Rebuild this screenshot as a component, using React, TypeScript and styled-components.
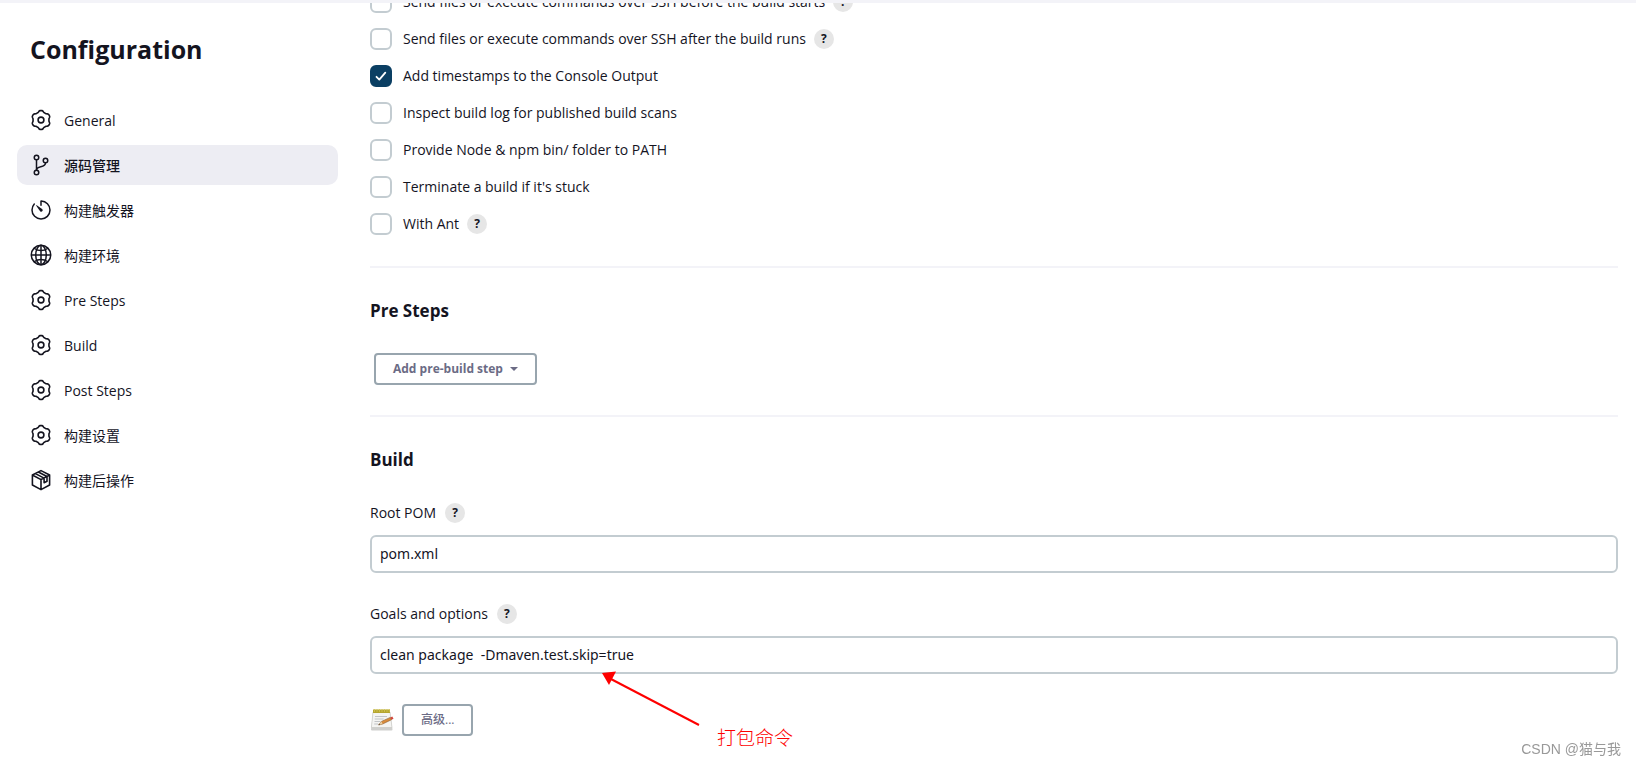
import React, { useId, useState } from 'react';
import styled, { createGlobalStyle } from 'styled-components';
import { IoGitBranchOutline, IoGlobeOutline, IoTimerOutline } from 'react-icons/io5';

const GlobalStyle = createGlobalStyle`
  *, *::before, *::after { box-sizing: border-box; }
  body {
    margin: 0;
    background: #fff;
    color: #14141f;
    font: 14px/20px "Open Sans", "Noto Sans CJK SC", sans-serif;
  }
`;

const TopBar = styled.div`
  height: 3px;
  background: #f3f3f8;
`;

const Page = styled.div`
  display: grid;
  grid-template-columns: 321px minmax(0, 1fr);
  column-gap: 32px;
  padding: 0 18px 0 17px;
`;

const Sidebar = styled.aside`
  padding-top: 28px;
`;

const PageTitle = styled.h1`
  margin: 0 0 33px;
  padding-left: 13px;
  font-size: 25px;
  line-height: 36px;
  font-weight: 700;
`;

const NavList = styled.nav`
  display: flex;
  flex-direction: column;
  gap: 5px;
`;

const NavItem = styled.a<{ $active?: boolean }>`
  display: flex;
  align-items: center;
  gap: 11px;
  height: 40px;
  padding: 0 12px;
  border-radius: 10px;
  background: ${(p) => (p.$active ? '#ededf3' : 'transparent')};
  font-weight: ${(p) => (p.$active ? 500 : 400)};
  line-height: 22px;
  color: inherit;
  text-decoration: none;

  svg {
    width: 24px;
    height: 24px;
    flex: none;
  }
`;

const NavText = styled.span`
  padding-top: 1px;
`;

const Main = styled.main`
  overflow: hidden;
  padding-bottom: 28px;
`;

/* The list is scrolled partly under the top bar. */
const OptionList = styled.div`
  display: flex;
  flex-direction: column;
  gap: 15px;
  margin-top: -12px;
  padding-bottom: 31px;
`;

const OptionRow = styled.div`
  display: flex;
  align-items: center;
  gap: 8px;
  height: 22px;
`;

const OptionLabel = styled.label`
  display: flex;
  align-items: center;
  gap: 11px;
`;

const CheckBox = styled.span`
  display: grid;
  width: 22px;
  height: 22px;

  > * {
    grid-area: 1 / 1;
  }

  svg {
    width: 22px;
    height: 22px;
    pointer-events: none;
  }
`;

const CheckInput = styled.input`
  appearance: none;
  width: 22px;
  height: 22px;
  margin: 0;
  border: 2px solid #c3ccd1;
  border-radius: 6px;
  background: #fff;

  &:checked {
    border-color: #0b3f63;
    background: #0b3f63;
  }
`;

const HelpButton = styled.button`
  width: 20px;
  height: 20px;
  padding: 0;
  border: 0;
  border-radius: 50%;
  background: #e6e6e6;
  color: #14141f;
  font: 700 12px/20px "Open Sans", sans-serif;
  text-align: center;
`;

const Section = styled.section`
  padding: 31px 0 30px;
  border-top: 2px solid #f3f3f8;
`;

const SectionTitle = styled.h2`
  margin: 0 0 30px;
  font-size: 17px;
  line-height: 24px;
  font-weight: 700;
`;

const OutlineButton = styled.button<{ $inset?: boolean }>`
  display: inline-flex;
  align-items: center;
  gap: 7px;
  height: 32px;
  margin-left: ${(p) => (p.$inset ? '4px' : '0')};
  padding: 0 17px;
  border: 2px solid #98a5ae;
  border-radius: 4px;
  background: #fff;
  color: #6b6b85;
  font: 700 12px/20px "Open Sans", "Noto Sans CJK SC", sans-serif;
`;

const ButtonText = styled.span<{ $light?: boolean }>`
  font-weight: ${(p) => (p.$light ? 500 : 700)};
`;

const Caret = styled.span`
  border: 4px solid transparent;
  border-top-color: currentColor;
  border-bottom-width: 0;
`;

const Field = styled.div`
  display: flex;
  flex-direction: column;
  gap: 12px;
  margin-bottom: 30px;
`;

const FieldHead = styled.div`
  display: flex;
  align-items: center;
  gap: 9px;
  height: 21px;
`;

const TextInput = styled.input`
  width: 100%;
  height: 38px;
  padding: 0 8px 2px;
  border: 2px solid #c3ccd1;
  border-radius: 6px;
  background: #fff;
  color: inherit;
  font: 14px/20px "Noto Sans", "Noto Sans CJK SC", sans-serif;
`;

const AdvancedRow = styled.div`
  position: relative;
  display: flex;
  align-items: center;
  gap: 8px;

  > svg {
    flex: none;
  }
`;

/* Callout drawn over the form, pointing at the goals field. */
const Callout = styled.div`
  position: absolute;
  left: 231px;
  top: -34px;
  display: flex;
  align-items: flex-end;
  gap: 17px;
  color: #fe0000;
`;

const CalloutText = styled.span`
  font: 300 19px/24px "Noto Sans CJK SC", sans-serif;
  margin-bottom: -23px;
`;

const Watermark = styled.div`
  position: fixed;
  right: 15px;
  bottom: 6px;
  color: #999;
  font: 14px/20px "Liberation Sans", "Noto Sans CJK SC", sans-serif;
`;

/* Outline of a gear with six soft lobes, one of them pointing up. */
const GEAR_PATH =
  'M' +
  Array.from({ length: 72 }, (_, i) => {
    const a = (i * Math.PI) / 36;
    const wave = Math.cos(6 * a);
    const r = 8.7 + 0.8 * Math.tanh(1.8 * wave);
    return `${(12 + r * Math.sin(a)).toFixed(2)} ${(12 - r * Math.cos(a)).toFixed(2)}`;
  }).join('L') +
  'Z';

const GearIcon = () => (
  <svg viewBox="0 0 24 24" fill="none" stroke="currentColor" strokeWidth="1.6" strokeLinejoin="round" aria-hidden="true">
    <path d={GEAR_PATH} />
    <circle cx="12" cy="12" r="2.9" />
  </svg>
);

const PackageIcon = () => (
  <svg viewBox="0 0 24 24" fill="none" stroke="currentColor" strokeWidth="1.6" strokeLinejoin="round" strokeLinecap="round" aria-hidden="true">
    <path d="M12 2.6 20.6 7v10L12 21.6 3.4 17V7zM3.4 7l8.6 4.6L20.6 7M12 11.6v10M6.4 5.6l8.7 4.5v4.6l2.9-1.5V8.5L9.3 4" />
  </svg>
);

const NotepadIcon = () => (
  <svg width="24" height="24" viewBox="0 0 24 24" aria-hidden="true">
    <path d="M3 4h17l2.500 17.500q0 1-1 1H2q-1 0-1-1z" fill="#cfcfcd" />
    <path d="M3 4h17l2 15.500H1.400z" fill="#f4f4f2" stroke="#c4c4c0" strokeWidth=".6" />
    <path d="M5 8.500h12M4.700 11h9M4.500 13.500h6M4.200 16h4" stroke="#c2c4c6" />
    <path d="M3 1.500h17V5H3z" fill="#b5a52f" />
    <path d="M4.500 1v3M7 1v3M9.500 1v3M12 1v3M14.500 1v3M17 1v3M19.300 1v3" stroke="#d0c450" strokeWidth=".8" />
    <path d="M8.500 17l3-3.600 8.800-4 1.200 2.300-9 4.400z" fill="#d98b3b" stroke="#8a5a2c" strokeWidth=".6" />
    <path d="M8.500 17l3-3.600 1 2.700z" fill="#e9cfa0" />
    <path d="M8.500 17l1-1.300.7.900z" fill="#333" />
    <path d="M20.300 9.400l2-.9 1.200 2.300-2 .900z" fill="#d2463c" />
  </svg>
);

const NAV = [
  { text: 'General', Icon: GearIcon },
  { text: '源码管理', Icon: IoGitBranchOutline, active: true },
  { text: '构建触发器', Icon: IoTimerOutline },
  { text: '构建环境', Icon: IoGlobeOutline },
  { text: 'Pre Steps', Icon: GearIcon },
  { text: 'Build', Icon: GearIcon },
  { text: 'Post Steps', Icon: GearIcon },
  { text: '构建设置', Icon: GearIcon },
  { text: '构建后操作', Icon: PackageIcon },
];

const OPTIONS = [
  { text: 'Send files or execute commands over SSH before the build starts', help: true },
  { text: 'Send files or execute commands over SSH after the build runs', help: true },
  { text: 'Add timestamps to the Console Output', checked: true },
  { text: 'Inspect build log for published build scans' },
  { text: 'Provide Node & npm bin/ folder to PATH' },
  { text: "Terminate a build if it's stuck" },
  { text: 'With Ant', help: true },
];

function Option({ text, help, checked = false }: { text: string; help?: boolean; checked?: boolean }) {
  const [on, setOn] = useState(checked);
  const id = useId();
  return (
    <OptionRow>
      <OptionLabel htmlFor={id}>
        <CheckBox>
          <CheckInput id={id} type="checkbox" checked={on} onChange={(e) => setOn(e.target.checked)} />
          {on && (
            <svg viewBox="0 0 22 22" fill="none" stroke="#fff" strokeWidth="1.800" strokeLinecap="round" strokeLinejoin="round">
              <path d="M6.500 11.800 9.300 14.600 15.300 7.600" />
            </svg>
          )}
        </CheckBox>
        {text}
      </OptionLabel>
      {help && <HelpButton type="button">?</HelpButton>}
    </OptionRow>
  );
}

function TextField({ label, value }: { label: string; value: string }) {
  const id = useId();
  return (
    <Field>
      <FieldHead>
        <label htmlFor={id}>{label}</label>
        <HelpButton type="button">?</HelpButton>
      </FieldHead>
      <TextInput id={id} type="text" defaultValue={value} />
    </Field>
  );
}

export default function App() {
  return (
    <>
      <GlobalStyle />
      <TopBar />
      <Page>
        <Sidebar>
          <PageTitle>Configuration</PageTitle>
          <NavList>
            {NAV.map(({ text, Icon, active }) => (
              <NavItem key={text} href="#" $active={active}>
                <Icon />
                <NavText>{text}</NavText>
              </NavItem>
            ))}
          </NavList>
        </Sidebar>
        <Main>
          <OptionList>
            {OPTIONS.map((o) => (
              <Option key={o.text} {...o} />
            ))}
          </OptionList>
          <Section>
            <SectionTitle>Pre Steps</SectionTitle>
            <OutlineButton type="button" $inset>
              <ButtonText>Add pre-build step</ButtonText>
              <Caret />
            </OutlineButton>
          </Section>
          <Section>
            <SectionTitle>Build</SectionTitle>
            <TextField label="Root POM" value="pom.xml" />
            <TextField label="Goals and options" value="clean package  -Dmaven.test.skip=true" />
            <AdvancedRow>
              <NotepadIcon />
              <OutlineButton type="button">
                <ButtonText $light>高级...</ButtonText>
              </OutlineButton>
              <Callout>
                <svg width="99" height="56" viewBox="0 0 99 56" aria-hidden="true">
                  <path d="M8 8 98 55" stroke="#fe0000" strokeWidth="2" />
                  <path d="M1 3 15 1.500 8 15z" fill="#fe0000" />
                </svg>
                <CalloutText>打包命令</CalloutText>
              </Callout>
            </AdvancedRow>
          </Section>
        </Main>
      </Page>
      <Watermark>CSDN @猫与我</Watermark>
    </>
  );
}
